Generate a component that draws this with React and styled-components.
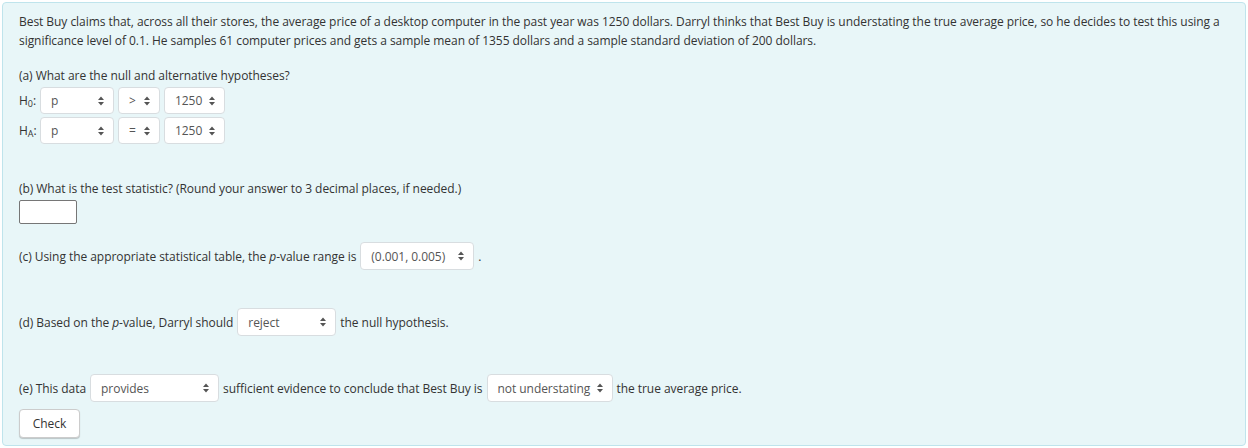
import React from 'react';
import styled, { createGlobalStyle } from 'styled-components';

const Global = createGlobalStyle`
  body {
    margin: 0;
    background: #fff;
    font-family: 'Open Sans', 'Noto Sans', sans-serif;
    font-size: 12px;
    letter-spacing: -0.05px;
    color: #333;
  }
`;

const Panel = styled.div`
  margin: 2px;
  height: 444px;
  box-sizing: border-box;
  border: 1px solid #bfe4ec;
  border-radius: 4px;
  background: #e8f6f8;
  padding: 9px 16px 10px;
`;

const Intro = styled.p`
  margin: 0 0 17px;
  line-height: 19px;
`;

const Part = styled.div`
  margin-bottom: ${(p) => p.$after || 0}px;
  line-height: 18px;
`;

const Line = styled.div`
  display: flex;
  align-items: center;
  gap: 4px;
  margin-top: ${(p) => p.$before || 0}px;
  margin-bottom: ${(p) => p.$after || 0}px;
`;

const HypLabel = styled.span`
  width: 17px;
  sub {
    font-size: 9px;
    vertical-align: -2px;
  }
`;

const Select = styled.span`
  display: inline-flex;
  align-items: center;
  justify-content: space-between;
  box-sizing: border-box;
  width: ${(p) => p.$w}px;
  height: ${(p) => p.$h || 28}px;
  padding: 0 9px 0 10px;
  background: #fff;
  border: 1px solid #d8dde0;
  border-radius: 4px;
  color: #555;
`;

const TextBox = styled.div`
  width: 58px;
  height: 24px;
  box-sizing: border-box;
  border: 1px solid #767676;
  border-radius: 2px;
  background: #fff;
  margin-top: 2px;
`;

const Italic = styled.em`
  font-style: italic;
`;

const Button = styled.button`
  font: inherit;
  color: #333;
  background: #fff;
  border: 1px solid #ccc;
  border-radius: 4px;
  box-shadow: 0 1px 1px rgba(0, 0, 0, 0.2);
  width: 61px;
  height: 29px;
  padding: 0;
`;

const Arrows = () => (
  <svg width="6" height="10" viewBox="0 0 6 10">
    <path d="M0 4 L3 0.5 L6 4 Z M0 6 L3 9.5 L6 6 Z" fill="#555" />
  </svg>
);

const Dropdown = ({ w, h, children }) => (
  <Select $w={w} $h={h}>
    <span>{children}</span>
    <Arrows />
  </Select>
);

export default function App() {
  return (
    <>
      <Global />
      <Panel>
        <Intro>
          Best Buy claims that, across all their stores, the average price of a desktop computer in the past year was 1250 dollars.
          Darryl thinks that Best Buy is understating the true average price, so he decides to test this using a significance level
          of 0.1. He samples 61 computer prices and gets a sample mean of 1355 dollars and a sample standard deviation of 200 dollars.
        </Intro>
        <Part $after={2}>(a) What are the null and alternative hypotheses?</Part>
        <Line $after={3}>
          <HypLabel>H<sub>0</sub>:</HypLabel>
          <Dropdown w={74} h={27}>p</Dropdown>
          <Dropdown w={42} h={27}>&gt;</Dropdown>
          <Dropdown w={61} h={27}>1250</Dropdown>
        </Line>
        <Line $after={36}>
          <HypLabel>H<sub>A</sub>:</HypLabel>
          <Dropdown w={74} h={27}>p</Dropdown>
          <Dropdown w={42} h={27}>=</Dropdown>
          <Dropdown w={61} h={27}>1250</Dropdown>
        </Line>
        <Part>(b) What is the test statistic? (Round your answer to 3 decimal places, if needed.)</Part>
        <TextBox />
        <Line $before={18} $after={38}>
          <span>(c) Using the appropriate statistical table, the <Italic>p</Italic>-value range is</span>
          <Dropdown w={114}>(0.001, 0.005)</Dropdown>
          <span>.</span>
        </Line>
        <Line $after={38}>
          <span>(d) Based on the <Italic>p</Italic>-value, Darryl should</span>
          <Dropdown w={99}>reject</Dropdown>
          <span>the null hypothesis.</span>
        </Line>
        <Line $after={7}>
          <span>(e) This data</span>
          <Dropdown w={129}>provides</Dropdown>
          <span>sufficient evidence to conclude that Best Buy is</span>
          <Dropdown w={126}>not understating</Dropdown>
          <span>the true average price.</span>
        </Line>
        <Button>Check</Button>
      </Panel>
    </>
  );
}
